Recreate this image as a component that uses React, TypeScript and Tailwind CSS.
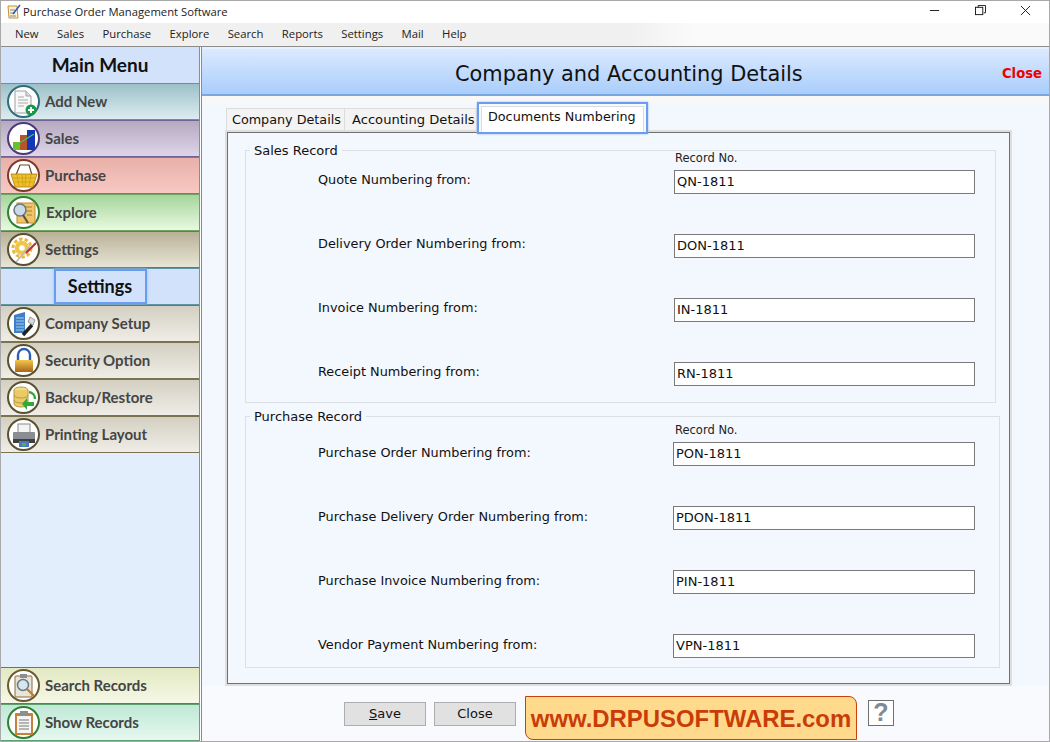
import { ReactNode } from "react";

const font = "font-['DejaVu_Sans','Liberation_Sans',sans-serif]";

function Basket() {
  return (
    <svg viewBox="0 0 28 28" className="h-7 w-7">
      <path d="M6 13 L10 3 H19 L22 13" fill="none" stroke="#6b4a20" strokeWidth="1.2" />
      <path d="M1 12 H27 L23 25 H5 Z" fill="#efc02a" stroke="#a87a10" strokeWidth="0.8" />
      <path d="M7 13 L9 24 M12 13 L13 24 M16 13 L15 24 M21 13 L19 24 M3 16 H25 M5 20 H23" stroke="#c99c18" strokeWidth="0.7" />
    </svg>
  );
}

function AddDoc() {
  return (
    <svg viewBox="0 0 28 28" className="h-7 w-7">
      <path d="M5 3 H16 L21 8 V25 H5 Z" fill="#f8f8f8" stroke="#a0a0a0" />
      <path d="M16 3 V8 H21" fill="#ddd" stroke="#a0a0a0" />
      <path d="M8 9 H14 M8 12 H18 M8 15 H18 M8 18 H14" stroke="#aaa" />
      <circle cx="21" cy="22" r="5.5" fill="#179a48" />
      <path d="M21 19 V25 M18 22 H24" stroke="#fff" strokeWidth="2" />
    </svg>
  );
}

function Bars() {
  return (
    <svg viewBox="0 0 28 28" className="h-7 w-7">
      <rect x="3" y="17" width="7" height="8" fill="#74c020" />
      <rect x="10" y="10" width="7" height="15" fill="#b5562a" />
      <rect x="17" y="5" width="8" height="20" fill="#1438b5" />
      <path d="M3 22 L24 9" stroke="#3fc46a" strokeWidth="1.2" />
    </svg>
  );
}

function Explore() {
  return (
    <svg viewBox="0 0 28 28" className="h-7 w-7">
      <rect x="7" y="4" width="18" height="20" fill="#eec568" stroke="#c08a30" />
      <path d="M15 8 H22 M16 12 H22 M17 16 H22" stroke="#a87a30" />
      <circle cx="10" cy="11" r="6" fill="#c9dbe8" stroke="#6b7a85" strokeWidth="1.6" />
      <path d="M13 16 L18 24" stroke="#5b5040" strokeWidth="2" />
    </svg>
  );
}

function Gear() {
  return (
    <svg viewBox="0 0 28 28" className="h-7 w-7">
      <circle cx="12" cy="12" r="9" fill="none" stroke="#e7b93a" strokeWidth="3" strokeDasharray="3.4 2.2" />
      <circle cx="12" cy="12" r="5" fill="none" stroke="#eec64a" strokeWidth="4.4" />
      <path d="M6 26 L20 10" stroke="#b8bcc0" strokeWidth="1.6" />
      <path d="M16 17 L26 7" stroke="#cc2a2a" strokeWidth="2.2" />
    </svg>
  );
}

function Company() {
  return (
    <svg viewBox="0 0 28 28" className="h-7 w-7">
      <path d="M4 5 L15 2 V23 H4 Z" fill="#3f7fc6" />
      <path d="M6 8 H14 M6 11 H14 M6 14 H14 M6 17 H14 M6 20 H14" stroke="#a8d0f0" strokeWidth="1" />
      <path d="M13 25 L22 15" stroke="#222" strokeWidth="3.4" />
      <path d="M20 7 L25 10 L23 15 L18 12 Z" fill="#d5dadf" stroke="#777" strokeWidth="0.7" />
    </svg>
  );
}

function Lock() {
  return (
    <svg viewBox="0 0 28 28" className="h-7 w-7">
      <path d="M8 13 V8 A6 6 0 0 1 20 8 V13" fill="none" stroke="#2f5fb5" strokeWidth="2.4" />
      <defs>
        <linearGradient id="lockbody" x1="0" y1="0" x2="0" y2="1">
          <stop offset="0" stopColor="#f3c64a" />
          <stop offset="1" stopColor="#a8641c" />
        </linearGradient>
      </defs>
      <rect x="5" y="13" width="18" height="12" rx="1" fill="url(#lockbody)" />
    </svg>
  );
}

function Backup() {
  return (
    <svg viewBox="0 0 28 28" className="h-7 w-7">
      <ellipse cx="11" cy="6" rx="7" ry="3" fill="#f2dc8a" stroke="#b89a40" />
      <path d="M4 6 V20 A7 3 0 0 0 18 20 V6" fill="#eccb66" stroke="#b89a40" />
      <path d="M4 11 A7 3 0 0 0 18 11 M4 16 A7 3 0 0 0 18 16" fill="none" stroke="#b89a40" />
      <path d="M12 20 L17 14 V18 H24 V22 H17 V26 Z" fill="#33a83a" />
      <path d="M19 8 A7 7 0 0 1 25 15" fill="none" stroke="#33a83a" strokeWidth="2.4" />
    </svg>
  );
}

function Printer() {
  return (
    <svg viewBox="0 0 28 28" className="h-7 w-7">
      <rect x="8" y="3" width="12" height="9" fill="#f4f4f4" stroke="#888" />
      <rect x="3" y="11" width="22" height="9" rx="1" fill="#8a8e93" />
      <rect x="3" y="18" width="22" height="4" fill="#3c3e42" />
      <rect x="9" y="20" width="10" height="6" fill="#4a78c0" />
      <rect x="12" y="22" width="4" height="3" fill="#5cae4c" />
    </svg>
  );
}

function SearchRec() {
  return (
    <svg viewBox="0 0 28 28" className="h-7 w-7">
      <rect x="5" y="4" width="17" height="21" rx="1" fill="#e9e4d8" stroke="#8a6a3a" />
      <rect x="10" y="2" width="7" height="4" fill="#8b8f94" />
      <circle cx="13" cy="13" r="5.5" fill="#d5e6ef" stroke="#6d7a82" strokeWidth="1.5" />
      <path d="M17 17 L24 24" stroke="#c87a2a" strokeWidth="2.4" />
    </svg>
  );
}

function ShowRec() {
  return (
    <svg viewBox="0 0 28 28" className="h-7 w-7">
      <rect x="5" y="4" width="18" height="22" rx="1" fill="#c8803a" />
      <rect x="7" y="7" width="14" height="17" fill="#f5f5f5" />
      <rect x="10" y="2" width="8" height="4" fill="#8b8f94" />
      <path d="M9 11 H19 M9 14 H19 M9 17 H19 M9 20 H19" stroke="#777" />
    </svg>
  );
}

function AppIcon() {
  return (
    <svg viewBox="0 0 16 16" className="h-4 w-4">
      <path d="M3 2 H12 L13 14 H4 Z" fill="#fbf3d8" stroke="#c98f2a" />
      <path d="M5 6 H10 M5 9 H10 M5 12 H11" stroke="#7a8aa0" />
      <path d="M8 10 L15 1" stroke="#2b55c0" strokeWidth="1.5" />
    </svg>
  );
}

type MenuRow = {
  label: string;
  icon: ReactNode;
  ring: string;
  row: string;
  textX?: string;
};

const beige = "bg-[linear-gradient(#d3cfc2,#efede6)] border-[#7b7350]";

const topItems: MenuRow[] = [
  { label: "Add New", icon: <AddDoc />, ring: "border-[#2f6c7c]", row: "bg-[linear-gradient(#9dc0c8,#dcecf0)] border-[#5f95a5]" },
  { label: "Sales", icon: <Bars />, ring: "border-[#4a3a78]", row: "bg-[linear-gradient(#b5a9c0,#ded5ea)] border-[#6f6495]" },
  { label: "Purchase", icon: <Basket />, ring: "border-[#7c3a2a]", row: "bg-[linear-gradient(#e8b0a8,#f8c8c4)] border-[#c4604f]" },
  { label: "Explore", icon: <Explore />, ring: "border-[#2f8030]", row: "bg-[linear-gradient(#a5d59c,#e8f9e0)] border-[#6fa55f]", textX: "ml-[6px]" },
  { label: "Settings", icon: <Gear />, ring: "border-[#5a5030]", row: "bg-[linear-gradient(#b9b097,#e8e5d5)] border-[#7b7350]" },
];

const settingItems: MenuRow[] = [
  { label: "Company Setup", icon: <Company />, ring: "border-[#5a5030]", row: beige },
  { label: "Security Option", icon: <Lock />, ring: "border-[#5a5030]", row: beige },
  { label: "Backup/Restore", icon: <Backup />, ring: "border-[#5a5030]", row: beige },
  { label: "Printing Layout", icon: <Printer />, ring: "border-[#5a5030]", row: beige },
];

const bottomItems: MenuRow[] = [
  { label: "Search Records", icon: <SearchRec />, ring: "border-[#6b5a30]", row: "bg-[linear-gradient(#e2e9c2,#f6f8e6)] border-[#7b7350]" },
  { label: "Show Records", icon: <ShowRec />, ring: "border-[#2f8030]", row: "bg-[linear-gradient(#bfe8d5,#e6f8f0)] border-[#5f9f70]" },
];

function MenuItem({ item }: { item: MenuRow }) {
  return (
    <div className={`flex h-[37px] items-center border-y pl-[6px] ${item.row}`}>
      <div className={`flex h-[33px] w-[33px] shrink-0 items-center justify-center rounded-full border-2 bg-white ${item.ring}`}>
        {item.icon}
      </div>
      <span className={`pb-[1px] font-['Lato','Open_Sans',sans-serif] text-[15px] font-bold text-[#454545] ${item.textX ?? "ml-[5px]"}`}>
        {item.label}
      </span>
    </div>
  );
}

function Field({ label, value, box, labelTop }: { label: string; value: string; box: string; labelTop: string }) {
  return (
    <div className="flex h-[64px] items-start">
      <label className={`w-[428px] shrink-0 pl-[72px] text-[12.85px] leading-[18px] text-[#111] ${labelTop}`}>{label}</label>
      <input
        readOnly
        value={value}
        className={`h-[24px] border border-[#7a7a7a] bg-white px-[2px] pb-[2px] text-[13px] text-[#111] outline-none ${box}`}
      />
    </div>
  );
}

type GroupProps = {
  title: string;
  rows: string[][];
  className: string;
  box: string;
  top: string;
  labelTop: string;
};

function Group({ title, rows, className, box, top, labelTop }: GroupProps) {
  return (
    <fieldset className={`border border-[#dcdfe4] ${className}`}>
      <legend className="ml-[4px] px-[4px] pt-[1px] text-[13px] leading-[16px] text-[#111]">{title}</legend>
      <div className={`ml-[429px] h-[12px] pb-[1px] text-[11.5px] leading-[11px] text-[#222] ${top}`}>Record No.</div>
      <div className="mt-[5px]">
        {rows.map((r) => (
          <Field key={r[0]} label={r[0]} value={r[1]} box={box} labelTop={labelTop} />
        ))}
      </div>
    </fieldset>
  );
}

const salesRows = [
  ["Quote Numbering from:", "QN-1811"],
  ["Delivery Order Numbering from:", "DON-1811"],
  ["Invoice Numbering from:", "IN-1811"],
  ["Receipt Numbering from:", "RN-1811"],
];

const purchaseRows = [
  ["Purchase Order Numbering from:", "PON-1811"],
  ["Purchase Delivery Order Numbering from:", "PDON-1811"],
  ["Purchase Invoice Numbering from:", "PIN-1811"],
  ["Vendor Payment Numbering from:", "VPN-1811"],
];

export default function App() {
  return (
    <div className={`flex h-[742px] w-[1050px] flex-col overflow-hidden border border-[#a9a9a9] bg-white ${font}`}>
      {/* title bar */}
      <div className="flex h-[22px] shrink-0 items-center bg-white pl-[4px]">
        <AppIcon />
        <span className="ml-[2px] font-['Open_Sans',sans-serif] text-[11.25px] text-[#222]">Purchase Order Management Software</span>
        <div className="mb-[3px] ml-auto flex items-center">
          <svg viewBox="0 0 12 12" className="mr-[35px] h-[11px] w-[11px]"><path d="M1 6 H11" stroke="#111" /></svg>
          <svg viewBox="0 0 12 12" className="mr-[34px] h-[11px] w-[11px]" fill="none" stroke="#111"><path d="M3.5 2.5 V0.5 H11.5 V8.5 H9.5" /><rect x="0.5" y="2.5" width="8" height="8" /></svg>
          <svg viewBox="0 0 12 12" className="mr-[18px] h-[11px] w-[11px]"><path d="M1 1 L11 11 M11 1 L1 11" stroke="#111" /></svg>
        </div>
      </div>

      {/* menu bar */}
      <div className="flex h-[24px] shrink-0 items-center gap-[18.4px] border-b border-[#8c8c8c] bg-[linear-gradient(90deg,#f0f0f0_60%,#fafafa_66%)] pl-[14px] font-['Open_Sans',sans-serif] text-[11.3px] text-[#222]">
        {["New", "Sales", "Purchase", "Explore", "Search", "Reports", "Settings", "Mail", "Help"].map((m) => (
          <span key={m}>{m}</span>
        ))}
      </div>

      <div className="flex min-h-0 flex-1">
        {/* left menu */}
        <aside className="flex w-[199px] shrink-0 flex-col border-r border-[#8c8c8c] bg-[#e3eefd]">
          <div className="flex h-[36px] items-center justify-center bg-[#d1e2fa] pt-[1px] font-['Lato','Open_Sans',sans-serif] text-[19px] font-bold text-[#111]">
            Main Menu
          </div>
          {topItems.map((item) => (
            <MenuItem key={item.label} item={item} />
          ))}
          <div className="flex h-[37px] items-center justify-center border-y border-[#5f95a5] bg-[#d1e2fa]">
            <div className="flex h-[35px] w-[93px] items-center justify-center border-2 border-[#6a9cf2] font-['Lato','Open_Sans',sans-serif] text-[18px] font-bold text-[#111] shadow-[0_0_3px_#9dbcf0]">
              Settings
            </div>
          </div>
          {settingItems.map((item) => (
            <MenuItem key={item.label} item={item} />
          ))}
          <div className="mt-auto">
            {bottomItems.map((item) => (
              <MenuItem key={item.label} item={item} />
            ))}
          </div>
        </aside>

        {/* content */}
        <main className="ml-[1px] flex min-w-0 flex-1 flex-col border-l border-[#8c8c8c] bg-[#f3f7fe]">
          <div className="flex h-[49px] shrink-0 items-center border-y-2 border-t-[#e6f0ff] border-b-[#7ba7e0] bg-[linear-gradient(#dceaff,#a9cdfb)] pt-[6px]">
            <h1 className="ml-[253px] text-[20.9px] font-normal text-[#111]">Company and Accounting Details</h1>
            <button className="ml-auto mr-[7px] pb-[2px] text-[13.2px] font-bold text-[#f00000]">Close</button>
          </div>

          <div className="h-[8px] shrink-0 bg-[#f8f8f8]" />

          <div className="ml-[24px] mr-[37px] mt-[2px] flex h-[24px] shrink-0 items-end text-[12.75px] text-[#111]">
            <div className="flex h-[22px] w-[119px] items-center border border-b-0 border-[#dcdcdc] bg-[#f3f3f3] pl-[5px]">Company Details</div>
            <div className="flex h-[22px] w-[132px] items-center border-r border-t border-[#dcdcdc] bg-[#f3f3f3] pl-[7px] text-[13.1px]">Accounting Details</div>
            <div className="z-10 mb-[-4px] flex h-[32px] w-[171px] items-stretch border-2 border-[#6a9cf2] bg-[#f6f9ff] px-[2px] pt-[2px] shadow-[0_0_2px_#9dbcf0]">
              <div className="flex flex-1 items-center border-x border-t border-[#dcdcdc] bg-white pb-[5px] pl-[6px]">Documents Numbering</div>
            </div>
          </div>

          <div className="ml-[23px] mr-[37px] h-[556px] shrink-0 border-2 border-[#dedede] bg-[#f3f7fe]">
            <div className="h-full border border-[#707070] pl-[17px] pt-[9px]">
              <Group title="Sales Record" rows={salesRows} className="mr-[13px] h-[261px]" box="w-[301px]" top="mt-[-6px]" labelTop="pt-[1px]" />
              <Group title="Purchase Record" rows={purchaseRows} className="mr-[9px] mt-[5px] h-[260px]" box="ml-[-1px] w-[302px]" top="mt-0" labelTop="pt-[2px]" />
            </div>
          </div>

          {/* footer */}
          <div className="flex min-h-0 flex-1 items-center bg-[#f8fafe] pl-[142px]">
            <button className="h-[24px] w-[82px] border border-[#adadad] bg-[#e1e1e1] text-[13px] text-[#111]">
              <span className="underline">S</span>ave
            </button>
            <button className="ml-[8px] h-[24px] w-[82px] border border-[#adadad] bg-[#e1e1e1] text-[13px] text-[#111]">Close</button>
            <div className="ml-[9px] mt-[8px] flex h-[44px] w-[332px] items-center justify-center rounded-bl-[8px] rounded-tr-[8px] border border-[#c8400a] bg-[#ffd98c] pt-[2px] font-['Liberation_Sans',sans-serif] text-[23.9px] font-bold text-[#c93c08]">
              www.DRPUSOFTWARE.com
            </div>
            <div className="mb-[2px] ml-[11px] flex h-[26px] w-[26px] items-center justify-center border border-[#707070] bg-white font-['Liberation_Sans',sans-serif] text-[25px] font-bold text-[#7d8a99]">
              ?
            </div>
          </div>
        </main>
      </div>
    </div>
  );
}
